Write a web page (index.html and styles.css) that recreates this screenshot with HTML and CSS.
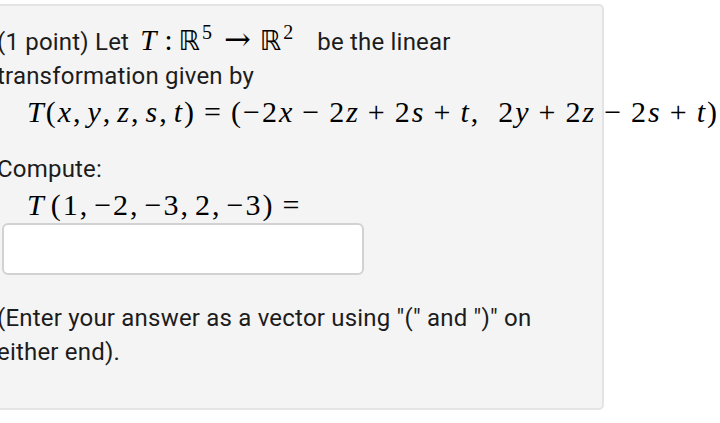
FILE: index.html
```html
<!DOCTYPE html>
<html>
<head>
<meta charset="utf-8">
<link rel="stylesheet" href="styles.css">
</head>
<body>
<div class="panel">
  <p class="text">(1 point) Let <span class="math inline"><i>T</i><span class="rel colon">:</span><span class="bb">ℝ</span><sup>5</sup><span class="rel arrow">→</span><span class="bb">ℝ</span><sup>2</sup></span> be the linear transformation given by</p>
  <div class="display formula"><span class="math"><i>T</i>(<i>x</i>,<span class="thin"></span><i>y</i>,<span class="thin"></span><i>z</i>,<span class="thin"></span><i>s</i>,<span class="thin"></span><i>t</i>)<span class="rel">=</span>(−2<i>x</i><span class="bin">−</span>2<i>z</i><span class="bin">+</span>2<i>s</i><span class="bin">+</span><i>t</i>,<span class="quad"></span>2<i>y</i><span class="bin">+</span>2<i>z</i><span class="bin">−</span>2<i>s</i><span class="bin">+</span><i>t</i>)</span></div>
  <p class="text compute">Compute:</p>
  <div class="display eval"><span class="math"><i>T</i><span class="thin"></span>(1,<span class="thin"></span>−2,<span class="thin"></span>−3,<span class="thin"></span>2,<span class="thin"></span>−3)<span class="rel">=</span></span></div>
  <div class="answer"></div>
  <p class="text note">(Enter your answer as a vector using "(" and ")" on either end).</p>
</div>
</body>
</html>
```
FILE: styles.css
```css
html, body {
  margin: 0;
  padding: 0;
  background: #ffffff;
  overflow: hidden;
}

.panel {
  box-sizing: border-box;
  margin: 4px 0 0 -15px;
  width: 619px;
  height: 406px;
  padding: 16px 27px 0 10px;
  background: #f4f4f4;
  border: 2px solid #e4e4e4;
  border-radius: 5px;
  font-family: Roboto, "Liberation Sans", sans-serif;
  font-size: 24px;
  letter-spacing: 0.2px;
  line-height: 34px;
  color: #1c1c1c;
}

.text {
  margin: 0;
}

.math {
  font-family: "Liberation Serif", "DejaVu Serif", serif;
  font-size: 30px;
  letter-spacing: 2px;
  color: #000;
  white-space: nowrap;
}

.math i {
  font-style: italic;
}

.inline {
  font-size: 29px;
  margin: 0 18px 0 5px;
  letter-spacing: 0;
}

.bb {
  font-family: "DejaVu Sans", sans-serif;
  font-size: 27px;
  letter-spacing: 0;
}

.math sup {
  font-size: 20px;
  line-height: 0;
  vertical-align: 11px;
  margin-left: 2px;
}

.rel {
  margin: 0 8px;
}

.colon {
  margin: 0 6px 0 8px;
}

.arrow {
  font-family: "DejaVu Serif", serif;
  font-size: 32px;
  margin: 0 9px 0 12px;
}

.bin {
  margin: 0 8px;
}

.thin {
  display: inline-block;
  width: 5px;
}

.quad {
  display: inline-block;
  width: 18px;
}

.display {
  margin-left: 30px;
  white-space: nowrap;
  height: 38px;
  line-height: 38px;
}

.compute {
  margin-top: 21px;
}

.answer {
  box-sizing: border-box;
  width: 362px;
  height: 52px;
  margin: -1px 0 0 5px;
  background: #ffffff;
  border: 2px solid #d2d2d2;
  border-radius: 6px;
}

.note {
  margin-top: 26px;
}
```
